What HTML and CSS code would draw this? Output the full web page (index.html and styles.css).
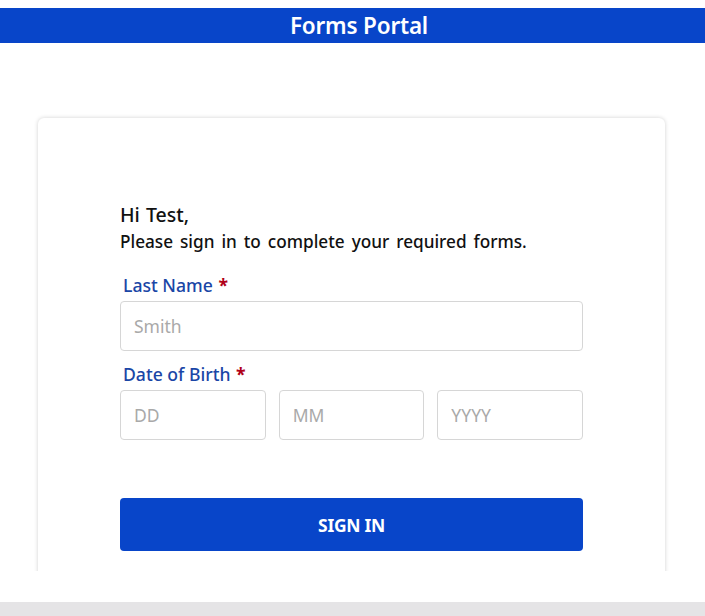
FILE: index.html
```html
<!DOCTYPE html>
<html lang="en">
<head>
<meta charset="utf-8">
<title>Forms Portal</title>
<link rel="stylesheet" href="styles.css">
</head>
<body>
<div class="app">
  <header class="topbar">Forms Portal</header>
  <main class="viewport">
    <section class="card">
      <div class="greeting">
        <p class="hello">Hi Test,</p>
        <p class="intro">Please sign in to complete your required forms.</p>
      </div>
      <form class="form">
        <div class="field">
          <label class="label" for="ln">Last Name <span class="req">*</span></label>
          <input class="input" id="ln" type="text" placeholder="Smith">
        </div>
        <div class="field">
          <label class="label" for="dd">Date of Birth <span class="req">*</span></label>
          <div class="dob">
            <input class="input" id="dd" type="text" placeholder="DD">
            <input class="input" type="text" placeholder="MM">
            <input class="input" type="text" placeholder="YYYY">
          </div>
        </div>
        <button class="btn" type="button">SIGN IN</button>
      </form>
    </section>
  </main>
  <div class="gap"></div>
  <div class="bottombar"></div>
</div>
</body>
</html>
```

FILE: styles.css
```css
* { box-sizing: border-box; }
html, body { margin: 0; padding: 0; background: #fff; }
body {
  font-family: "Noto Sans", "Open Sans", sans-serif;
  color: #111;
}
.app {
  height: 616px;
  display: flex;
  flex-direction: column;
  padding-top: 8px;
}
.topbar {
  height: 35px;
  background: #0845c9;
  color: #fff;
  font-size: 22.5px;
  font-weight: 600;
  display: flex;
  align-items: center;
  justify-content: center;
  padding-left: 13px;
  letter-spacing: -0.2px;
}
.viewport {
  height: 528px;
  overflow: hidden;
  padding: 75px 40px 0 38px;
}
.card {
  background: #fff;
  border-radius: 6px;
  box-shadow: 0 0 4px rgba(0,0,0,0.18);
  padding: 84px 82px 40px 82px;
  height: 560px;
}
.greeting { margin-bottom: 20px; }
.hello {
  margin: 0;
  font-size: 19.5px;
  font-weight: 500;
  line-height: 26px;
  word-spacing: 1px;
}
.intro {
  margin: 2px 0 0;
  font-size: 17.2px;
  font-weight: 500;
  line-height: 24px;
  word-spacing: 2.5px;
}
.form { display: flex; flex-direction: column; }
.field { display: flex; flex-direction: column; margin-bottom: 12px; }
.label {
  color: #1a46a6;
  font-size: 17.6px;
  font-weight: 500;
  line-height: 22px;
  padding-left: 3px;
  margin-bottom: 5px;
}
.req { color: #b00018; font-weight: 700; margin-left: 1px; }
.input {
  height: 50px;
  border: 1px solid #d6d6d6;
  border-radius: 4px;
  padding: 0 13px;
  font-family: inherit;
  font-size: 17.5px;
  color: #333;
  background: #fff;
  width: 100%;
}
.input::placeholder { color: #a9a9a9; }
.dob {
  display: grid;
  grid-template-columns: 1fr 1fr 1fr;
  gap: 13px;
}
.btn {
  margin-top: 46px;
  height: 53px;
  width: 100%;
  background: #0845c9;
  border: none;
  border-radius: 4px;
  color: #fff;
  font-family: inherit;
  font-size: 17.5px;
  font-weight: 700;
  letter-spacing: -0.3px;
}
.gap { height: 31px; }
.bottombar { height: 14px; background: #e5e4e6; }
```
